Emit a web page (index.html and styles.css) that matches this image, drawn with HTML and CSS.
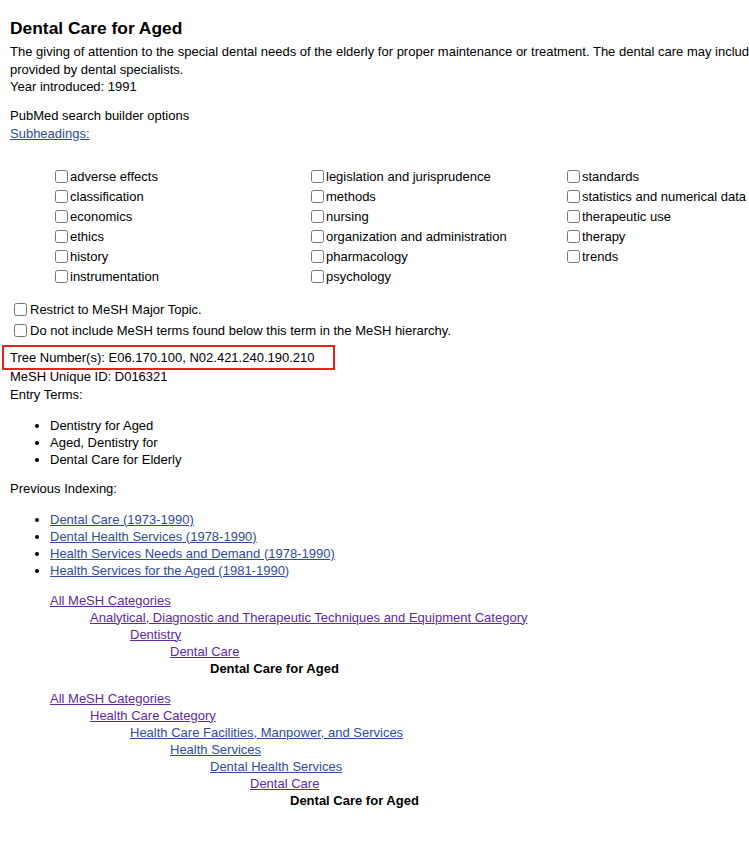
FILE: index.html
```html
<!DOCTYPE html>
<html lang="en">
<head>
<meta charset="utf-8">
<title>Dental Care for Aged</title>
<link rel="stylesheet" href="styles.css">
</head>
<body>
<div class="page">
  <h1 class="title">Dental Care for Aged</h1>
  <p class="scope">The giving of attention to the special dental needs of the elderly for proper maintenance or treatment. The dental care may include the services provided by dental specialists.<br>Year introduced: 1991</p>

  <div class="builder">
    <div>PubMed search builder options</div>
    <a class="link" href="#">Subheadings:</a>
  </div>

  <div class="subheadings">
    <div class="col">
      <label class="sh"><input type="checkbox" class="cb">adverse effects</label>
      <label class="sh"><input type="checkbox" class="cb">classification</label>
      <label class="sh"><input type="checkbox" class="cb">economics</label>
      <label class="sh"><input type="checkbox" class="cb">ethics</label>
      <label class="sh"><input type="checkbox" class="cb">history</label>
      <label class="sh"><input type="checkbox" class="cb">instrumentation</label>
    </div>
    <div class="col">
      <label class="sh"><input type="checkbox" class="cb">legislation and jurisprudence</label>
      <label class="sh"><input type="checkbox" class="cb">methods</label>
      <label class="sh"><input type="checkbox" class="cb">nursing</label>
      <label class="sh"><input type="checkbox" class="cb">organization and administration</label>
      <label class="sh"><input type="checkbox" class="cb">pharmacology</label>
      <label class="sh"><input type="checkbox" class="cb">psychology</label>
    </div>
    <div class="col">
      <label class="sh"><input type="checkbox" class="cb">standards</label>
      <label class="sh"><input type="checkbox" class="cb">statistics and numerical data</label>
      <label class="sh"><input type="checkbox" class="cb">therapeutic use</label>
      <label class="sh"><input type="checkbox" class="cb">therapy</label>
      <label class="sh"><input type="checkbox" class="cb">trends</label>
    </div>
  </div>

  <div class="options">
    <label class="opt"><input type="checkbox" class="cb2">Restrict to MeSH Major Topic.</label>
    <label class="opt"><input type="checkbox" class="cb2">Do not include MeSH terms found below this term in the MeSH hierarchy.</label>
  </div>

  <div class="tree-box">Tree Number(s): E06.170.100, N02.421.240.190.210</div>
  <div class="line">MeSH Unique ID: D016321</div>
  <div class="line">Entry Terms:</div>
  <ul class="list">
    <li>Dentistry for Aged</li>
    <li>Aged, Dentistry for</li>
    <li>Dental Care for Elderly</li>
  </ul>

  <div class="line">Previous Indexing:</div>
  <ul class="list">
    <li><a class="link" href="#">Dental Care (1973-1990)</a></li>
    <li><a class="link" href="#">Dental Health Services (1978-1990)</a></li>
    <li><a class="link" href="#">Health Services Needs and Demand (1978-1990)</a></li>
    <li><a class="link" href="#">Health Services for the Aged (1981-1990)</a></li>
  </ul>

  <div class="tree">
    <div class="lvl l0"><a class="visited" href="#">All MeSH Categories</a></div>
    <div class="lvl l1"><a class="visited" href="#">Analytical, Diagnostic and Therapeutic Techniques and Equipment Category</a></div>
    <div class="lvl l2"><a class="visited" href="#">Dentistry</a></div>
    <div class="lvl l3"><a class="visited" href="#">Dental Care</a></div>
    <div class="lvl l4"><b>Dental Care for Aged</b></div>
  </div>

  <div class="tree">
    <div class="lvl l0"><a class="visited" href="#">All MeSH Categories</a></div>
    <div class="lvl l1"><a class="visited" href="#">Health Care Category</a></div>
    <div class="lvl l2"><a class="link" href="#">Health Care Facilities, Manpower, and Services</a></div>
    <div class="lvl l3"><a class="link" href="#">Health Services</a></div>
    <div class="lvl l4"><a class="link" href="#">Dental Health Services</a></div>
    <div class="lvl l5"><a class="visited" href="#">Dental Care</a></div>
    <div class="lvl l6"><b>Dental Care for Aged</b></div>
  </div>
</div>
</body>
</html>
```

FILE: styles.css
```css
html, body {
  margin: 0;
  padding: 0;
  background: #ffffff;
}

body {
  font-family: "Liberation Sans", Arial, sans-serif;
  font-size: 13px;
  line-height: 17px;
  color: #000000;
  overflow: hidden;
}

.page {
  width: 850px;
  padding: 17px 10px 40px 10px;
}

.title {
  font-size: 17.4px;
  line-height: 22px;
  font-weight: bold;
  margin: 0 0 4px 0;
}

.scope {
  margin: 0;
  line-height: 17.5px;
}

.builder {
  margin-top: 11px;
  line-height: 18px;
}

.link {
  color: #2f4b9c;
  text-decoration: underline;
}

.visited {
  color: #5e2a9b;
  text-decoration: underline;
}

.subheadings {
  display: grid;
  grid-template-columns: 256px 256px 256px;
  margin: 24px 0 0 45px;
}

.col {
  display: flex;
  flex-direction: column;
}

.sh {
  display: flex;
  align-items: center;
  height: 20px;
  white-space: nowrap;
}

.cb {
  width: 13px;
  height: 13px;
  margin: 0 2px 0 0;
}

.options {
  margin-top: 12px;
  display: flex;
  flex-direction: column;
}

.opt {
  display: flex;
  align-items: center;
  height: 21px;
  white-space: nowrap;
}

.cb2 {
  width: 13px;
  height: 13px;
  margin: 0 3px 0 4px;
}

.tree-box {
  margin: 4px 0 -2px -8px;
  width: 323px;
  padding: 2px 0 2px 6px;
  border: 2px solid #e8231f;
  white-space: nowrap;
}

.line {
  line-height: 18px;
}

.list {
  margin: 13px 0 12px 0;
  padding-left: 40px;
}

.list li {
  line-height: 17px;
}

.tree {
  margin: 13px 0 13px 40px;
}

.lvl {
  line-height: 17px;
}

.l1 { padding-left: 40px; }
.l2 { padding-left: 80px; }
.l3 { padding-left: 120px; }
.l4 { padding-left: 160px; }
.l5 { padding-left: 200px; }
.l6 { padding-left: 240px; }
```
